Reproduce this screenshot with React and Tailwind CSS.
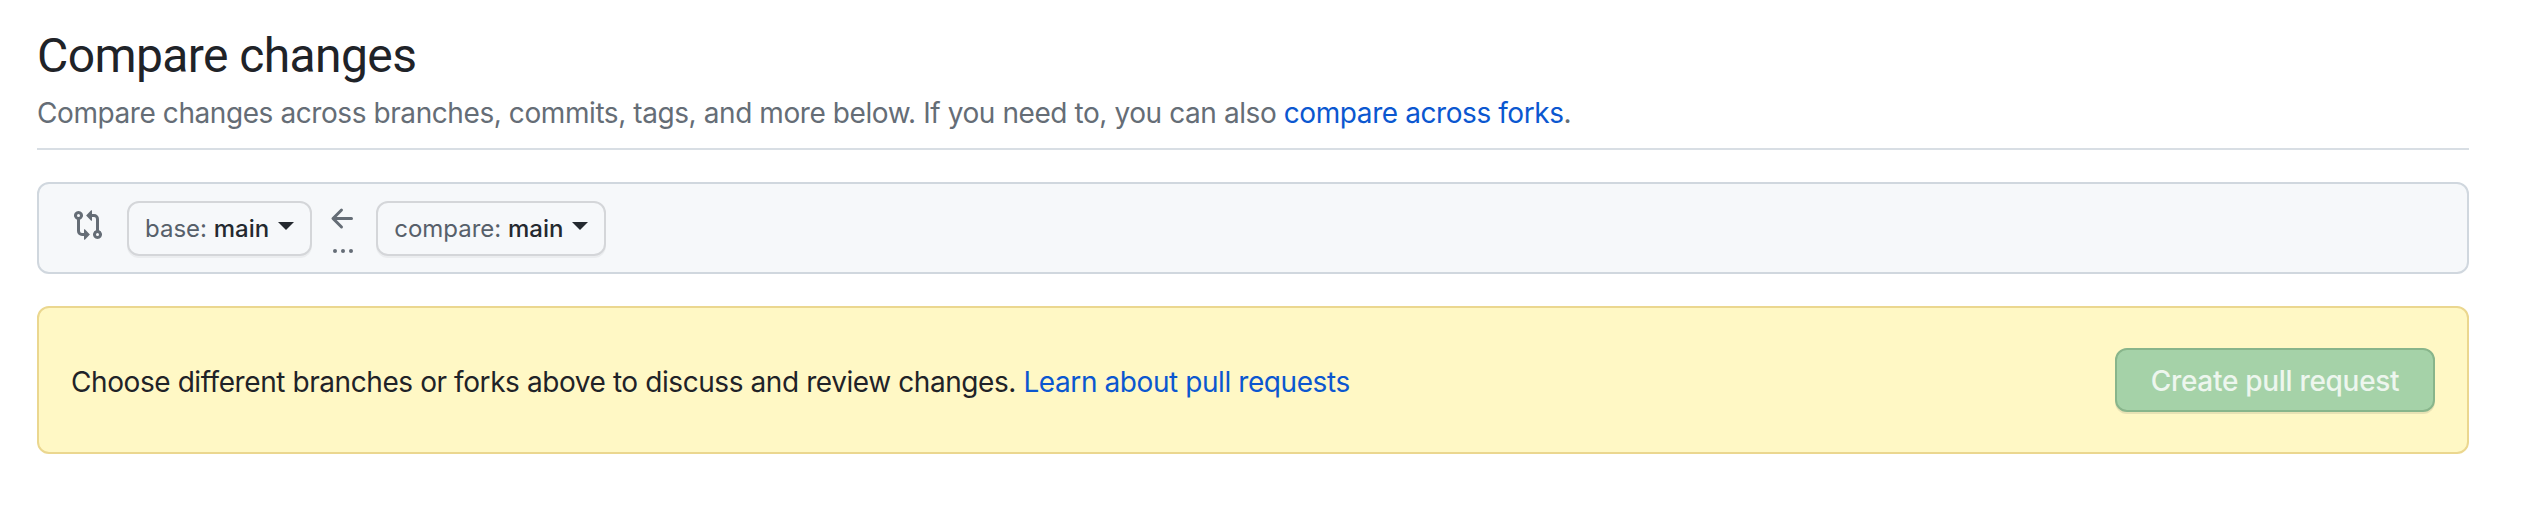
import React from "react";

const Caret = () => (
  <span className="ml-[9px] mb-[7px] inline-block border-x-[8px] border-t-[8px] border-x-transparent border-t-[#24292f]" />
);

const BranchButton = ({ label }) => (
  <button className="flex h-[55px] items-center rounded-[12px] border-2 border-[#d4d6d9] bg-[#f6f8fa] px-[16px] pt-[2px] text-[24px] shadow-[0_2px_0_rgba(31,35,40,0.05)]">
    <span className="text-[#57606a]">{label}:&nbsp;</span>
    <span className="font-medium text-[#24292f]">main</span>
    <Caret />
  </button>
);

const App = () => {
  return (
    <div className="h-[518px] bg-white px-[37px] pt-[28px] font-['Inter',sans-serif] text-[28px] tracking-[-0.42px]">
      <div className="w-[2432px]">
        <h1 className="font-['Roboto',sans-serif] text-[48px] leading-[56px] tracking-[-0.6px] text-[#1f2328]">Compare changes</h1>
        <p className="mt-[11px] leading-[36px] text-[#656d76]">
          Compare changes across branches, commits, tags, and more below. If you need to, you can also{" "}
          <a className="text-[#0b57d0]">compare across forks</a>.
        </p>
        <div className="mt-[17px] h-[2px] bg-[#d8dee4]" />

        <div className="mt-[32px] flex h-[92px] items-center rounded-[12px] border-2 border-[#d0d7de] bg-[#f6f8fa] pl-[33px] tracking-normal">
          <svg width="32" height="32" viewBox="0 0 16 16" fill="#656d76" className="mb-[7px] mr-[23px]">
            <path d="M9.573.677A.25.25 0 0 1 10 .854V2.5h1A2.5 2.5 0 0 1 13.5 5v5.628a2.251 2.251 0 1 1-1.5 0V5a1 1 0 0 0-1-1h-1v1.646a.25.25 0 0 1-.427.177L7.177 3.427a.25.25 0 0 1 0-.354ZM6 12v-1.646a.25.25 0 0 1 .427-.177l2.396 2.396a.25.25 0 0 1 0 .354l-2.396 2.396A.25.25 0 0 1 6 15.146V13.5H5A2.5 2.5 0 0 1 2.5 11V5.372a2.25 2.25 0 1 1 1.5 0V11a1 1 0 0 0 1 1ZM4 3.25a.75.75 0 1 0-1.5 0 .75.75 0 0 0 1.5 0ZM12.75 12a.75.75 0 1 0 0 1.5.75.75 0 0 0 0-1.5Z" />
          </svg>
          <BranchButton label="base" />
          <div className="ml-[15px] mr-[17px] flex flex-col items-center">
            <svg width="32" height="32" viewBox="0 0 16 16" fill="#656d76">
              <path d="M7.78 12.53a.75.75 0 0 1-1.06 0L2.47 8.28a.75.75 0 0 1 0-1.06l4.25-4.25a.751.751 0 0 1 1.042.018.751.751 0 0 1 .018 1.042L4.81 7h7.44a.75.75 0 0 1 0 1.5H4.81l2.97 2.97a.75.75 0 0 1 0 1.06Z" />
            </svg>
            <div className="mt-[14px] flex gap-[4px]">
              <span className="h-[4px] w-[4px] rounded-full bg-[#656d76]" />
              <span className="h-[4px] w-[4px] rounded-full bg-[#656d76]" />
              <span className="h-[4px] w-[4px] rounded-full bg-[#656d76]" />
            </div>
          </div>
          <BranchButton label="compare" />
        </div>

        <div className="mt-[32px] flex h-[148px] items-center justify-between rounded-[12px] border-2 border-[#ebd78f] bg-[#fff8c5] px-[32px]">
          <p className="pt-[4px] text-[#1f2328]">
            Choose different branches or forks above to discuss and review changes.{" "}
            <a className="text-[#0b57d0]">Learn about pull requests</a>
          </p>
          <button className="flex h-[64px] w-[320px] items-center justify-center rounded-[12px] border-2 border-[#88b58b] bg-[#a5d2a8] pt-[2px] text-[28px] font-medium tracking-[-0.3px] text-[#edf6ee] shadow-[0_2px_0_rgba(31,35,40,0.1)]">
            Create pull request
          </button>
        </div>
      </div>
    </div>
  );
};

export default App;
